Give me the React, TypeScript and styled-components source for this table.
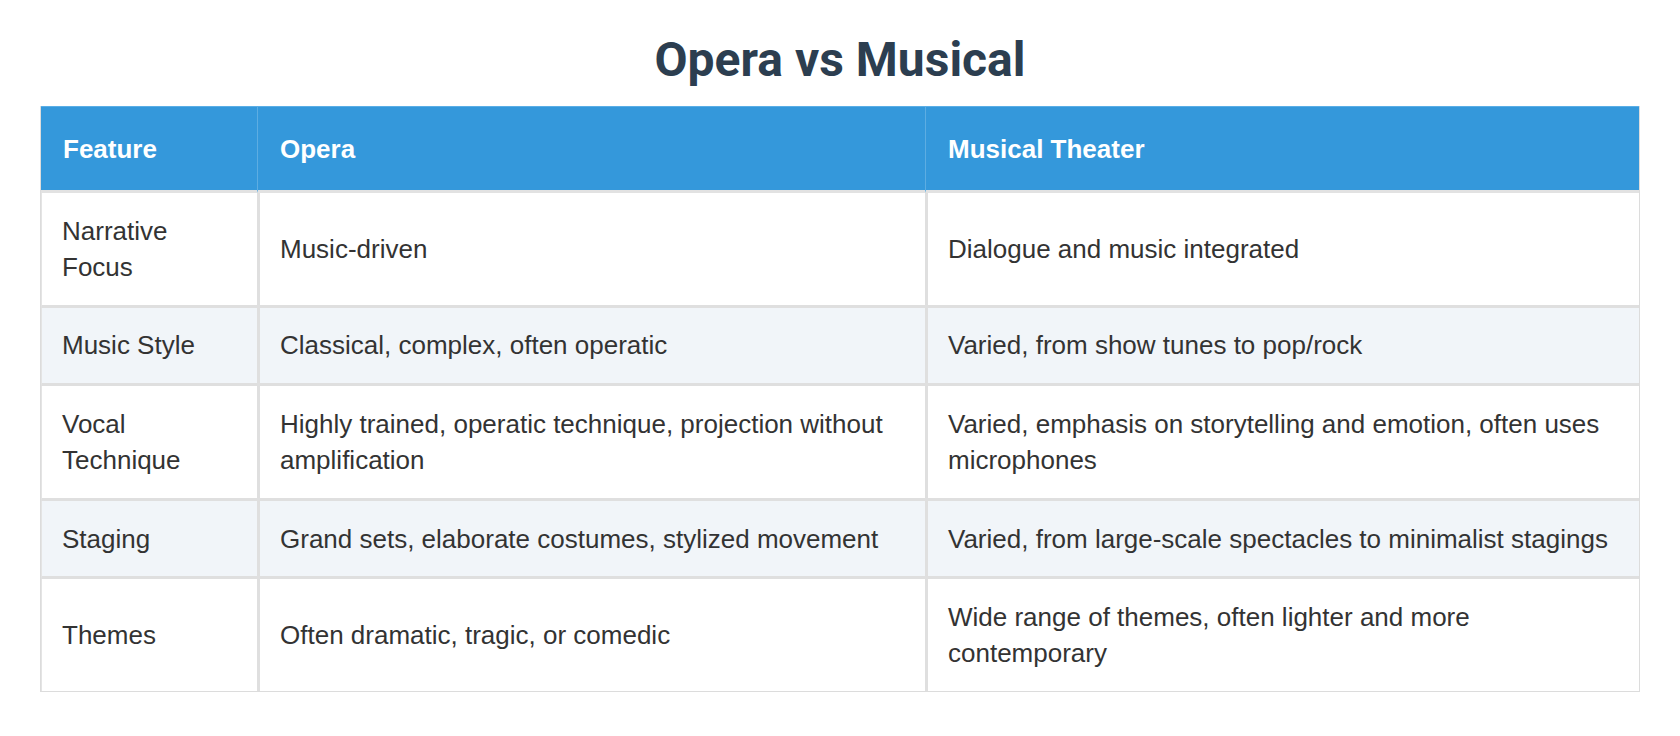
import { createGlobalStyle } from "styled-components";
import styled from "styled-components";

const GlobalStyle = createGlobalStyle`
  html, body {
    margin: 0;
    padding: 0;
    background: #ffffff;
  }
`;

const Page = styled.div`
  padding: 32px 40px 0;
  font-family: "Liberation Sans", Arial, sans-serif;
`;

const Title = styled.h1`
  margin: 0 0 18px;
  text-align: center;
  font-family: Roboto, "Liberation Sans", sans-serif;
  font-weight: 700;
  font-size: 48px;
  line-height: 56px;
  color: #2c3e50;
`;

const Table = styled.table`
  width: 100%;
  border-collapse: separate;
  border-spacing: 0;
  border: 1px solid #dcdcdc;
  border-top: 0;
  table-layout: fixed;
`;

const Col = styled.col<{ $w: number }>`
  width: ${(p) => p.$w}px;
`;

const HeadCell = styled.th`
  background: #3498db;
  color: #ffffff;
  text-align: left;
  font-weight: 700;
  font-size: 26px;
  line-height: 36px;
  padding: 24px 22px 23px 22px;
  border-top: 1px solid #5aaee6;
  border-bottom: 3px solid #e2e2e2;
  & + & {
    border-left: 1px solid #5dade2;
  }
`;

const Row = styled.tr<{ $alt: boolean }>`
  background: ${(p) => (p.$alt ? "#f1f5f9" : "#ffffff")};
`;

const Cell = styled.td<{ $last: boolean }>`
  font-size: 26px;
  line-height: 36.4px;
  color: #333333;
  padding: 19.5px 19px 19.5px 20px;
  vertical-align: middle;
  border-bottom: ${(p) => (p.$last ? "0" : "3px solid #dfdfdf")};
  &:first-child {
    border-left: 1px solid #e4e4e4;
  }
  & + & {
    border-left: 3px solid #dfdfdf;
  }
`;

const rows = [
  ["Narrative Focus", "Music-driven", "Dialogue and music integrated"],
  ["Music Style", "Classical, complex, often operatic", "Varied, from show tunes to pop/rock"],
  [
    "Vocal Technique",
    "Highly trained, operatic technique, projection without amplification",
    "Varied, emphasis on storytelling and emotion, often uses microphones",
  ],
  [
    "Staging",
    "Grand sets, elaborate costumes, stylized movement",
    "Varied, from large-scale spectacles to minimalist stagings",
  ],
  [
    "Themes",
    "Often dramatic, tragic, or comedic",
    "Wide range of themes, often lighter and more contemporary",
  ],
];

export default function App() {
  return (
    <>
      <GlobalStyle />
      <Page>
        <Title>Opera vs Musical</Title>
        <Table>
          <colgroup>
            <Col $w={216} />
            <Col $w={668} />
            <Col $w={714} />
          </colgroup>
          <thead>
            <tr>
              <HeadCell>Feature</HeadCell>
              <HeadCell>Opera</HeadCell>
              <HeadCell>Musical Theater</HeadCell>
            </tr>
          </thead>
          <tbody>
            {rows.map((r, i) => (
              <Row key={r[0]} $alt={i % 2 === 1}>
                {r.map((c) => (
                  <Cell key={c} $last={i === rows.length - 1}>
                    {c}
                  </Cell>
                ))}
              </Row>
            ))}
          </tbody>
        </Table>
      </Page>
    </>
  );
}
